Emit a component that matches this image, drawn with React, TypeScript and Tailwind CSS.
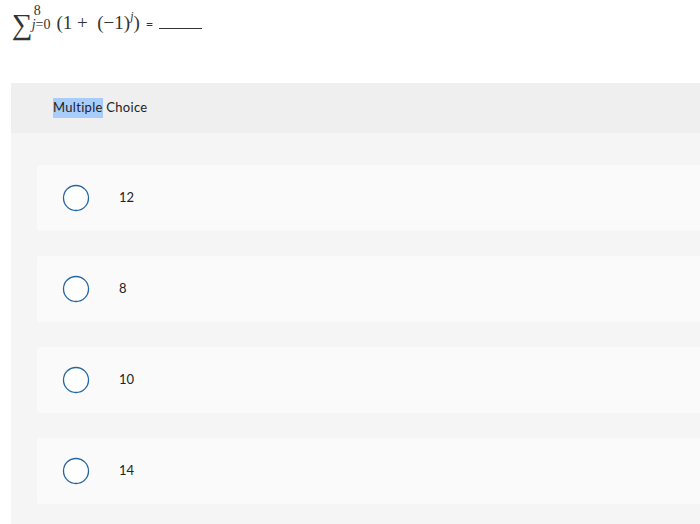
import React from "react";

const options = ["12", "8", "10", "14"];

function Radio() {
  return (
    <svg width="30" height="30" viewBox="0 0 30 30" className="shrink-0">
      <path d="M4 10 A12 12 0 0 1 10 4" stroke="#cfcfcf" strokeWidth="3" fill="none" />
      <circle cx="15" cy="15" r="12.5" fill="#ffffff" stroke="#2266a6" strokeWidth="1.3" />
    </svg>
  );
}

export default function App() {
  return (
    <div className="w-[700px] h-[524px] bg-white overflow-hidden font-['Lato',sans-serif] text-[#222]">
      <div className="h-[83px] pl-[12px] pt-[5px] font-['Liberation_Serif',serif] text-[#333] flex items-start">
        <span className="text-[29px] leading-[29px] mt-[5px]">∑</span>
        <span className="flex flex-col text-[14px] leading-[12px] -ml-[1px]">
          <span className="pl-[2px] h-[12px]">8</span>
          <span className="mt-[2px] h-[14px]"><i>j</i>=0</span>
        </span>
        <span className="ml-[6px] mt-[8px] text-[19px] leading-[20px] whitespace-nowrap flex items-start">
          <span>(1 + &nbsp;(−1)</span>
          <span className="text-[12px] leading-[12px] -mt-[3px]"><i>j</i></span>
          <span>)</span>
        </span>
        <span className="ml-[6px] mt-[11px] font-['Lato',sans-serif] text-[13px] leading-[16px]">=</span>
        <span className="ml-[6px] mt-[23px] w-[43px] border-b border-[#333]"></span>
      </div>
      <div className="ml-[11px] bg-[#f5f5f5] h-[441px]">
        <div className="h-[50px] bg-[#efefef] flex items-center pl-[42px] text-[13px] tracking-[0.3px] text-[#222]">
          <span className="bg-[#a9cdfb]">Multiple</span>
          <span>&nbsp;Choice</span>
        </div>
        <div className="pt-[32px] pl-[26px] flex flex-col gap-[25px]">
          {options.map((o) => (
            <div key={o} className="h-[66px] bg-[#fafafa] rounded-l-[3px] flex items-center pl-[24px]">
              <Radio />
              <span className="ml-[28px] text-[13px] text-[#222]">{o}</span>
            </div>
          ))}
        </div>
      </div>
    </div>
  );
}
